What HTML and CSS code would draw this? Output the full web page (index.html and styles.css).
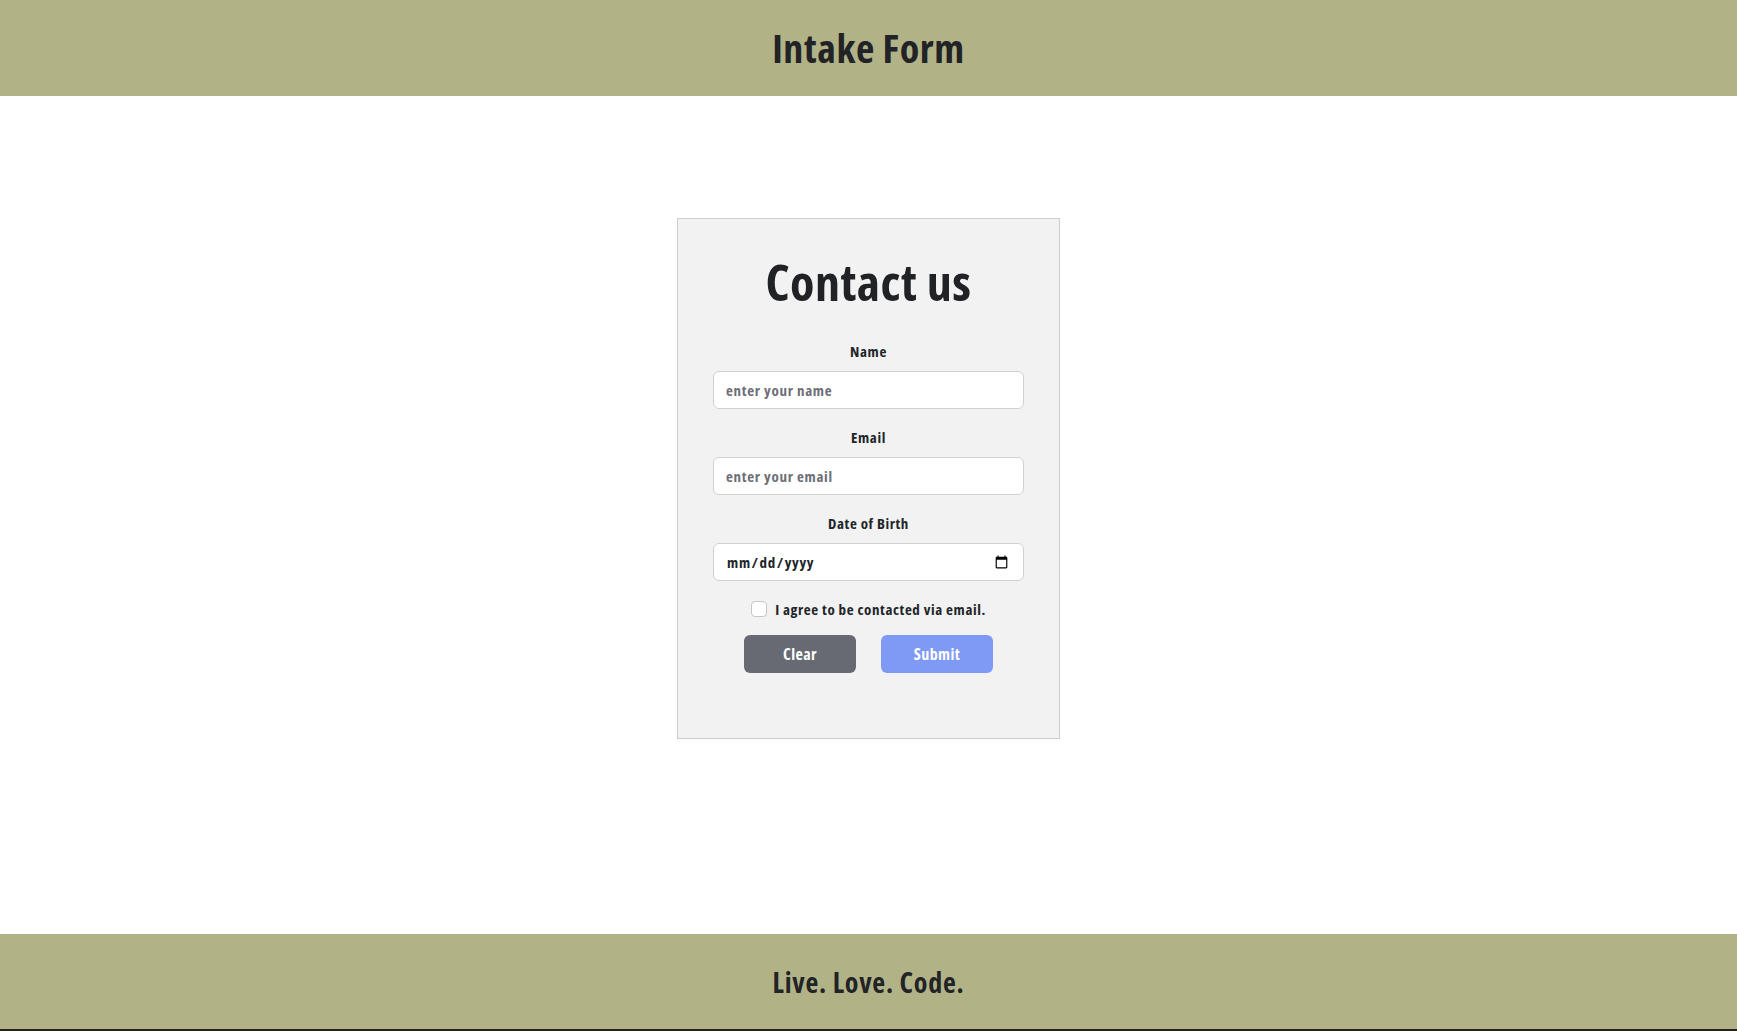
FILE: index.html
```html
<!DOCTYPE html>
<html lang="en">
<head>
<meta charset="utf-8">
<title>Intake Form</title>
<link rel="stylesheet" href="styles.css">
</head>
<body>
<header class="site-header">
  <h1 class="site-title">Intake Form</h1>
</header>
<main class="main">
  <form class="card">
    <h2 class="card-title">Contact us</h2>
    <div class="field">
      <label class="field-label" for="name">Name</label>
      <input class="field-input" id="name" type="text" placeholder="enter your name">
    </div>
    <div class="field">
      <label class="field-label" for="email">Email</label>
      <input class="field-input" id="email" type="email" placeholder="enter your email">
    </div>
    <div class="field">
      <label class="field-label" for="dob">Date of Birth</label>
      <input class="field-input" id="dob" type="date">
    </div>
    <div class="agree">
      <input class="agree-box" id="agree" type="checkbox">
      <label class="agree-label" for="agree">I agree to be contacted via email.</label>
    </div>
    <div class="actions">
      <button class="btn btn-clear" type="reset">Clear</button>
      <button class="btn btn-submit" type="submit">Submit</button>
    </div>
  </form>
</main>
<footer class="site-footer">
  <p class="footer-text">Live. Love. Code.</p>
</footer>
</body>
</html>
```
FILE: styles.css
```css
* { box-sizing: border-box; }
html, body { margin: 0; padding: 0; }
body {
  font-family: "Open Sans", "Noto Sans", sans-serif;
  font-stretch: 75%;
  font-weight: 700;
  letter-spacing: 0.6px;
  color: #212529;
  background: #ffffff;
  min-height: 100vh;
  display: flex;
  flex-direction: column;
}
.site-header {
  background: #b1b387;
  height: 96px;
  display: flex;
  align-items: center;
  justify-content: center;
}
.site-title {
  margin: 0;
  font-size: 40px;
  letter-spacing: 0.6px;
  line-height: 1;
  color: #222326;
}
.main {
  flex: 1;
  display: flex;
  justify-content: center;
  align-items: flex-start;
  padding-top: 122px;
}
.card {
  width: 383px;
  background: #f2f2f2;
  border: 1px solid #cccccc;
  padding: 34px 35px 65px;
  display: flex;
  flex-direction: column;
  align-items: center;
}
.card-title {
  margin: 0 0 31px;
  font-size: 50px;
  letter-spacing: 0.5px;
  line-height: 58px;
  color: #212226;
}
.field {
  width: 100%;
  display: flex;
  flex-direction: column;
  align-items: center;
  margin-bottom: 19px;
}
.field-label {
  font-size: 15px;
  line-height: 18px;
  margin-bottom: 11px;
}
.field-input {
  width: 100%;
  height: 38px;
  border: 1px solid #ced0d6;
  border-radius: 6px;
  background: #ffffff;
  padding: 0 12px;
  font-family: inherit;
  font-stretch: inherit;
  font-weight: 700;
  font-size: 15px;
  letter-spacing: 0.7px;
  color: #212529;
  outline: none;
}
.field-input::placeholder { color: #6c6e76; }
.agree {
  display: flex;
  align-items: center;
  gap: 8px;
  margin-bottom: 17px;
}
.agree-box {
  margin: 0;
  width: 16px;
  height: 16px;
  appearance: none;
  background: #ffffff;
  border: 1px solid #c4c6cc;
  border-radius: 4px;
}
.agree-label {
  font-size: 15px;
  line-height: 18px;
}
.actions {
  display: flex;
  gap: 25px;
}
.btn {
  width: 112px;
  height: 38px;
  border: none;
  border-radius: 6px;
  color: #ffffff;
  font-family: inherit;
  font-stretch: inherit;
  font-weight: 700;
  font-size: 16px;
  letter-spacing: 0.4px;
}
.btn-clear { background: #676a73; }
.btn-submit { background: #7f9af5; }
.site-footer {
  background: #b1b387;
  height: 97px;
  border-bottom: 2px solid #23241e;
  display: flex;
  align-items: center;
  justify-content: center;
}
.footer-text {
  margin: 0;
  font-size: 28px;
  letter-spacing: 0.75px;
  line-height: 1;
  color: #222326;
}
```
